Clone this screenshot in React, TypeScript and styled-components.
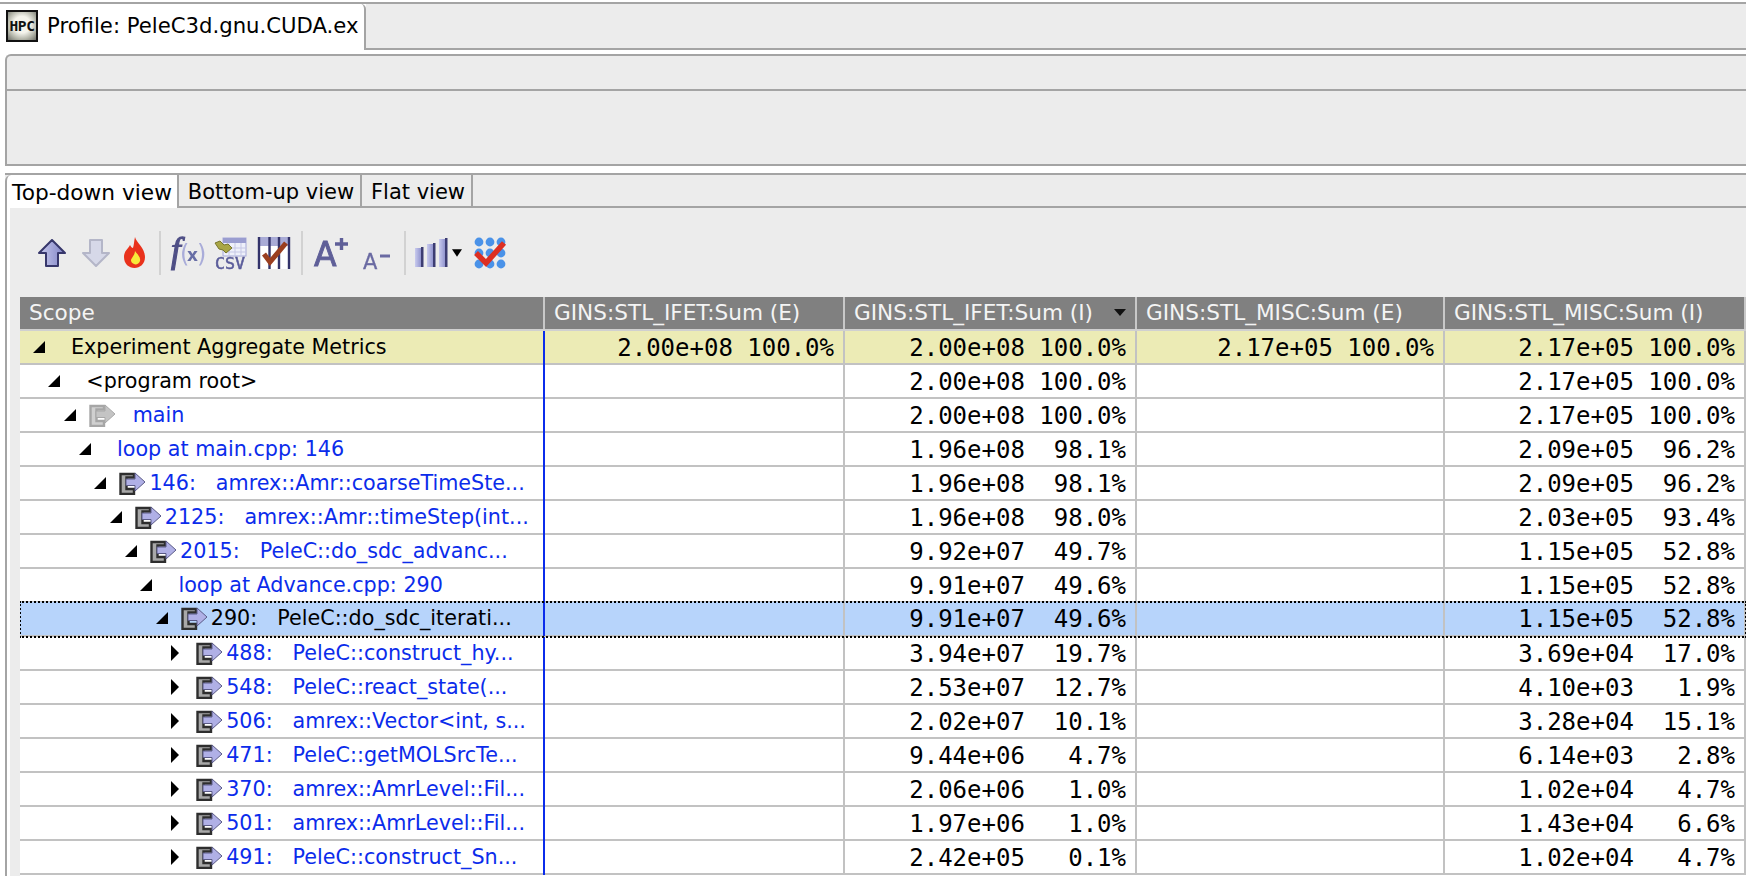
import React from "react";
import styled, { createGlobalStyle } from "styled-components";

const UI = `"DejaVu Sans", "Noto Sans", sans-serif`;
const MONO = `"DejaVu Sans Mono", "Liberation Mono", monospace`;
const COLS = "525px 300px 292px 308px 1fr";

const Global = createGlobalStyle`
  html, body { margin: 0; padding: 0; background: #fff; height: 876px; overflow: hidden; }
  #root { height: 876px; overflow: hidden; }
`;

const Page = styled.div`
  width: 1746px; height: 876px; overflow: hidden; display: flex; flex-direction: column;
  background: #fff; font-family: ${UI}; color: #000; padding-top: 2px; box-sizing: border-box;
`;
const EditorStrip = styled.div`
  display: flex; height: 48px; flex: none; border-top: 2px solid #a4a4a4; box-sizing: border-box;
`;
const EditorTab = styled.div`
  width: 361px; margin-left: 5px; display: flex; align-items: center; gap: 9px; box-sizing: border-box;
  background: #fff; border-right: 2px solid #a4a4a4; border-top-right-radius: 5px; padding: 0 0 4px 1px;
  font-size: 21.2px; white-space: nowrap;
`;
const StripFill = styled.div`
  flex: 1; background: #ececec; border-bottom: 2px solid #a4a4a4;
`;
const HpcBadge = styled.div`
  width: 32px; height: 32px; box-sizing: border-box; border: 2px solid #111; flex: none; margin-bottom: -1px;
  background: radial-gradient(circle at 50% 45%, #f4f4ec 0 40%, #b4b6aa 70%, #6d6f68 100%);
  display: flex; align-items: center; justify-content: center; overflow: hidden;
  font: bold 14.5px ${MONO}; letter-spacing: -0.4px; color: #111;
`;
const InfoPanel = styled.div`
  margin: 4px 0 0 5px; height: 112px; flex: none; box-sizing: border-box; background: #ececec;
  border: 2px solid #a4a4a4; border-right: none; border-top-left-radius: 6px;
`;
const InfoRule = styled.div`
  height: 33px; border-bottom: 2px solid #a4a4a4;
`;
const ViewFolder = styled.div`
  margin: 7px 0 0 5px; flex: 1; min-height: 0; display: flex; flex-direction: column;
`;
const ViewTabs = styled.div`
  display: flex; height: 35px; flex: none; box-sizing: border-box; background: #ececec;
  border-top: 2px solid #a4a4a4; border-bottom: 2px solid #a4a4a4;
`;
const ViewTab = styled.div<{ $w: number; $active?: boolean }>`
  width: ${(p) => p.$w}px; box-sizing: border-box; display: flex; align-items: center; justify-content: center;
  font-size: ${(p) => (p.$active ? "21.7px" : "21px")}; white-space: nowrap; border-right: 2px solid #a4a4a4;
  background: ${(p) => (p.$active ? "#fff" : "#ececec")};
  margin-bottom: ${(p) => (p.$active ? "-2px" : "0")};
  border-left: ${(p) => (p.$active ? "2px solid #a4a4a4" : "none")};
  border-top-left-radius: ${(p) => (p.$active ? "6px" : "0")};
  padding: 2px 0 0 ${(p) => (p.$active ? "0" : "3px")};
`;
const ViewBody = styled.div`
  flex: 1; min-height: 0; border-left: 2px solid #a4a4a4; padding-left: 3px; background: #fff;
`;
const ViewInner = styled.div`
  height: 100%; background: #ececec; padding-left: 10px; display: flex; flex-direction: column;
`;
const Toolbar = styled.div`
  height: 89px; flex: none; display: flex; align-items: center; padding-left: 18px; padding-top: 0;
  box-sizing: border-box;
`;
const Tool = styled.svg<{ $ml: number }>`
  flex: none; margin-left: ${(p) => p.$ml}px; display: block; overflow: visible; filter: blur(0.45px);
`;
const ToolSep = styled.div<{ $ml: number }>`
  width: 2px; height: 44px; background: #d2d2d2; flex: none; margin-left: ${(p) => p.$ml}px;
`;
const Table = styled.div`
  flex: 1; min-height: 0; background: #fff; overflow: hidden;
`;
const HeaderRow = styled.div`
  display: grid; grid-template-columns: ${COLS}; height: 34px; box-sizing: border-box;
  border-bottom: 2px solid #d0d0d0;
`;
const HeaderCell = styled.div<{ $sorted?: boolean }>`
  background: #808080; color: #f4f4f4; font-size: 21.6px; display: flex; align-items: center;
  justify-content: space-between; padding: 0 9px 1px 9px; box-sizing: border-box;
  border-right: 2px solid #c8c8c8; white-space: nowrap; overflow: hidden;
`;
const SortCaret = styled.span`
  width: 0; height: 0; border-left: 6px solid transparent; border-right: 6px solid transparent;
  border-top: 7px solid #111; flex: none;
`;
const Row = styled.div<{ $kind?: "agg" | "sel" }>`
  display: grid; grid-template-columns: ${COLS}; height: 34px; box-sizing: border-box;
  border-bottom: 2px solid #c2c2c2;
  background: ${(p) => (p.$kind === "agg" ? "#ecebb5" : p.$kind === "sel" ? "#b7d4fb" : "#fff")};
  ${(p) => p.$kind === "sel" && "outline: 2px dotted #000; outline-offset: -1px; margin-top: -1px; height: 35px;"}
`;
const ScopeCell = styled.div<{ $level: number; $link?: boolean }>`
  display: flex; align-items: center; box-sizing: border-box; white-space: pre; overflow: hidden;
  padding: 0 0 3px ${(p) => 12 + p.$level * 15.35}px; font-size: 20.7px; height: 34px; align-self: start;
  color: ${(p) => (p.$link ? "#0b2ceb" : "#000")};
  border-right: 2px solid #0b2ceb;
`;
const TreeSlot = styled.svg`
  flex: none; margin-right: 12px; display: block;
`;
const SiteIcon = styled.svg<{ $gap: number }>`
  flex: none; margin-right: ${(p) => p.$gap}px; display: block; filter: blur(0.35px);
`;
const PlainLabel = styled.span`
  margin-left: 13px;
`;
const Line = styled.span`
  margin-right: 20px;
`;
const MetricCell = styled.div`
  font: 24px ${MONO}; letter-spacing: 0; white-space: pre; text-align: right; padding-right: 9px;
  box-sizing: border-box; border-right: 2px solid #c2c2c2; display: flex; align-items: center; justify-content: flex-end;
`;

const Expanded = () => (
  <TreeSlot width="14" height="14" viewBox="0 0 14 14"><polygon points="13,1 13,13 1,13" fill="#000" /></TreeSlot>
);
const Collapsed = () => (
  <TreeSlot width="14" height="16" viewBox="0 0 14 16"><polygon points="1,0 9,8 1,16" fill="#000" /></TreeSlot>
);

const CallSite = ({ muted, gap }: { muted?: boolean; gap: number }) => {
  const frame = muted ? "#a6a6a6" : "#2e2e2e";
  const inner = muted ? "#d0d0d0" : "#a8a8a8";
  const head = muted ? "#c4c4c4" : "#b0b0e6";
  const line = muted ? "#a8a8a8" : "#5a5a86";
  return (
    <SiteIcon $gap={gap} width="27" height="24" viewBox="0 0 27 24">
      <path d="M1.5 3 H15 V6.5 H7.5 V18 H15 V23 H1.5 Z" fill={inner} stroke={frame} strokeWidth="2.4" />
      <path d="M7 8 H16 V2 L26 11 L16 20 V14.5 H7 Z" fill={head} stroke={line} strokeWidth="1" />
    </SiteIcon>
  );
};

type Rec = {
  level: number; open: boolean; label?: string; line?: string; icon?: "muted" | "on"; link?: boolean;
  m: (string | null)[]; kind?: "agg" | "sel";
};
const rows: Rec[] = [
  { level: 0, open: true, label: "Experiment Aggregate Metrics", kind: "agg", m: ["2.00e+08 100.0%", "2.00e+08 100.0%", "2.17e+05 100.0%", "2.17e+05 100.0%"] },
  { level: 1, open: true, label: "<program root>", m: [null, "2.00e+08 100.0%", null, "2.17e+05 100.0%"] },
  { level: 2, open: true, label: "main", icon: "muted", link: true, m: [null, "2.00e+08 100.0%", null, "2.17e+05 100.0%"] },
  { level: 3, open: true, label: "loop at main.cpp: 146", link: true, m: [null, "1.96e+08  98.1%", null, "2.09e+05  96.2%"] },
  { level: 4, open: true, line: "146:", label: "amrex::Amr::coarseTimeSte...", icon: "on", link: true, m: [null, "1.96e+08  98.1%", null, "2.09e+05  96.2%"] },
  { level: 5, open: true, line: "2125:", label: "amrex::Amr::timeStep(int...", icon: "on", link: true, m: [null, "1.96e+08  98.0%", null, "2.03e+05  93.4%"] },
  { level: 6, open: true, line: "2015:", label: "PeleC::do_sdc_advanc...", icon: "on", link: true, m: [null, "9.92e+07  49.7%", null, "1.15e+05  52.8%"] },
  { level: 7, open: true, label: "loop at Advance.cpp: 290", link: true, m: [null, "9.91e+07  49.6%", null, "1.15e+05  52.8%"] },
  { level: 8, open: true, line: "290:", label: "PeleC::do_sdc_iterati...", icon: "on", kind: "sel", m: [null, "9.91e+07  49.6%", null, "1.15e+05  52.8%"] },
  { level: 9, open: false, line: "488:", label: "PeleC::construct_hy...", icon: "on", link: true, m: [null, "3.94e+07  19.7%", null, "3.69e+04  17.0%"] },
  { level: 9, open: false, line: "548:", label: "PeleC::react_state(...", icon: "on", link: true, m: [null, "2.53e+07  12.7%", null, "4.10e+03   1.9%"] },
  { level: 9, open: false, line: "506:", label: "amrex::Vector<int, s...", icon: "on", link: true, m: [null, "2.02e+07  10.1%", null, "3.28e+04  15.1%"] },
  { level: 9, open: false, line: "471:", label: "PeleC::getMOLSrcTe...", icon: "on", link: true, m: [null, "9.44e+06   4.7%", null, "6.14e+03   2.8%"] },
  { level: 9, open: false, line: "370:", label: "amrex::AmrLevel::Fil...", icon: "on", link: true, m: [null, "2.06e+06   1.0%", null, "1.02e+04   4.7%"] },
  { level: 9, open: false, line: "501:", label: "amrex::AmrLevel::Fil...", icon: "on", link: true, m: [null, "1.97e+06   1.0%", null, "1.43e+04   6.6%"] },
  { level: 9, open: false, line: "491:", label: "PeleC::construct_Sn...", icon: "on", link: true, m: [null, "2.42e+05   0.1%", null, "1.02e+04   4.7%"] },
];

const headers = ["Scope", "GINS:STL_IFET:Sum (E)", "GINS:STL_IFET:Sum (I)", "GINS:STL_MISC:Sum (E)", "GINS:STL_MISC:Sum (I)"];

const Defs = () => (
  <svg width="0" height="0" style={{ position: "absolute" }}>
    <defs>
      <linearGradient id="lav" x1="0" x2="1" y1="0" y2="0">
        <stop offset="0" stopColor="#c9cbee" />
        <stop offset="1" stopColor="#7f82c4" />
      </linearGradient>
    </defs>
  </svg>
);

const Tools = () => (
  <Toolbar>
    <Tool $ml={0} width="28" height="28" viewBox="0 0 28 28">
      <polygon points="14,1 27,14 20,14 20,27 8,27 8,14 1,14" fill="url(#lav)" stroke="#37376b" strokeWidth="2" strokeLinejoin="round" />
    </Tool>
    <Tool $ml={16} width="28" height="28" viewBox="0 0 28 28">
      <polygon points="8,1 20,1 20,14 27,14 14,27 1,14 8,14" fill="#d6d8e8" stroke="#b4b6c8" strokeWidth="2" strokeLinejoin="round" />
    </Tool>
    <Tool $ml={13} width="23" height="32" viewBox="0 0 23 32">
      <path d="M12 0 C13 5 22 11 22 20 C22 27 17 31 11.5 31 C6 31 1 27 1 20 C1 14 5 12 7 8 C8 10 9 11 10 11 C11 8 11 4 12 0 Z" fill="#e9321c" />
      <path d="M12 14 C14 17 18 20 17 24 C16 27 13 28 11 27 C8 26 7 23 9 21 C10 19 12 17 12 14 Z" fill="#f8ea3a" />
    </Tool>
    <ToolSep $ml={13} />
    <Tool $ml={8} width="34" height="30" viewBox="0 0 34 30">
      <text x="2" y="24" fontFamily="Liberation Serif, serif" fontStyle="italic" fontSize="35" fill="#4f4f86" stroke="#4f4f86" strokeWidth="1.2">f</text>
      <text x="11" y="24" fontFamily="DejaVu Sans, sans-serif" fontSize="24" fill="#a9acd9">(</text>
      <text x="18" y="23" fontFamily="DejaVu Sans, sans-serif" fontWeight="bold" fontSize="17" fill="#686ea6">x</text>
      <text x="28" y="24" fontFamily="DejaVu Sans, sans-serif" fontSize="24" fill="#a9acd9">)</text>
    </Tool>
    <Tool $ml={11} width="32" height="30" viewBox="0 0 32 30">
      <rect x="9" y="0" width="23" height="18" fill="#eef0fa" stroke="#a5a8d8" />
      <rect x="9" y="0" width="23" height="5" fill="#9a9dd0" />
      <path d="M15 5 V18 M21 5 V18 M27 5 V18 M9 10 H32 M9 14 H32" stroke="#c6c8e6" strokeWidth="1" />
      <path d="M1 5 L6 3 L10 7 L14 6 L18 10 L12 15 L9 12 L5 11 Z" fill="#a9a645" stroke="#77752a" strokeWidth="1" />
      <text x="1" y="30.5" fontFamily="DejaVu Sans Mono, monospace" fontSize="15" textLength="30" lengthAdjust="spacingAndGlyphs" fill="#5a5c9a" stroke="#5a5c9a" strokeWidth="0.5">CSV</text>
    </Tool>
    <Tool $ml={12} width="32" height="32" viewBox="0 0 32 32">
      <rect x="0" y="0" width="32" height="32" fill="#fff" />
      <rect x="0" y="0" width="32" height="9" fill="#a9abd6" />
      <path d="M1 0 V32 M11.5 0 V32 M21 0 V32 M31 0 V32" stroke="#33336a" strokeWidth="2.4" />
      <path d="M6 17 L12 25 L28 6" fill="none" stroke="#9a3e1f" strokeWidth="5" />
    </Tool>
    <ToolSep $ml={11} />
    <Tool $ml={11} width="34" height="30" viewBox="0 0 34 30">
      <text x="0" y="28" fontFamily="DejaVu Sans, sans-serif" fontSize="33" fill="#5f5f98" stroke="#5f5f98" strokeWidth="0.9">A</text>
      <path d="M21 6 H34 M27.5 0 V12" stroke="#5f5f98" strokeWidth="3.4" />
    </Tool>
    <Tool $ml={15} width="27" height="22" viewBox="0 0 27 22" style={{ marginTop: 14 }}>
      <text x="0" y="20" fontFamily="DejaVu Sans, sans-serif" fontSize="21" fill="#6a6aa2" stroke="#6a6aa2" strokeWidth="0.3">A</text>
      <path d="M17 7 H27" stroke="#6a6aa2" strokeWidth="3" />
    </Tool>
    <ToolSep $ml={14} />
    <Tool $ml={9} width="32" height="30" viewBox="0 0 32 30">
      <rect x="0" y="10" width="8" height="19" fill="url(#lav)" /><rect x="6" y="9" width="2.5" height="20" fill="#3c3c72" />
      <rect x="12" y="6" width="8" height="23" fill="url(#lav)" /><rect x="18" y="5" width="2.5" height="24" fill="#3c3c72" />
      <rect x="24" y="1" width="8" height="28" fill="url(#lav)" /><rect x="30" y="0" width="2.5" height="29" fill="#3c3c72" />
    </Tool>
    <Tool $ml={5} width="10" height="8" viewBox="0 0 11 8">
      <polygon points="0,0 11,0 5.5,8" fill="#000" />
    </Tool>
    <Tool $ml={13} width="30" height="30" viewBox="0 0 30 30">
      {[4, 15, 26].flatMap((y) =>
        [4, 15, 26].map((x) => <circle key={`${x}-${y}`} cx={x} cy={y} r="4.4" fill="#4a92e8" />)
      )}
      <path d="M1 15 L11 25 L29 5" fill="none" stroke="#dc2f22" strokeWidth="5.5" />
    </Tool>
  </Toolbar>
);

export default function App() {
  return (
    <Page>
      <Global />
      <Defs />
      <EditorStrip>
        <EditorTab>
          <HpcBadge>HPC</HpcBadge>
          Profile: PeleC3d.gnu.CUDA.ex
        </EditorTab>
        <StripFill />
      </EditorStrip>
      <InfoPanel>
        <InfoRule />
      </InfoPanel>
      <ViewFolder>
        <ViewTabs>
          <ViewTab $w={174} $active>Top-down view</ViewTab>
          <ViewTab $w={183}>Bottom-up view</ViewTab>
          <ViewTab $w={111}>Flat view</ViewTab>
        </ViewTabs>
        <ViewBody>
          <ViewInner>
            <Tools />
            <Table>
              <HeaderRow>
                {headers.map((h, i) => (
                  <HeaderCell key={h}>
                    <span>{h}</span>
                    {i === 2 && <SortCaret />}
                  </HeaderCell>
                ))}
              </HeaderRow>
              {rows.map((r, i) => (
                <Row key={i} $kind={r.kind}>
                  <ScopeCell $level={r.level} $link={r.link}>
                    {r.open ? <Expanded /> : <Collapsed />}
                    {r.icon && <CallSite muted={r.icon === "muted"} gap={r.line ? 3 : 17} />}
                    {r.line && <Line>{r.line}</Line>}
                    {r.icon ? <span>{r.label}</span> : <PlainLabel>{r.label}</PlainLabel>}
                  </ScopeCell>
                  {r.m.map((v, j) => (
                    <MetricCell key={j}>{v}</MetricCell>
                  ))}
                </Row>
              ))}
            </Table>
          </ViewInner>
        </ViewBody>
      </ViewFolder>
    </Page>
  );
}
